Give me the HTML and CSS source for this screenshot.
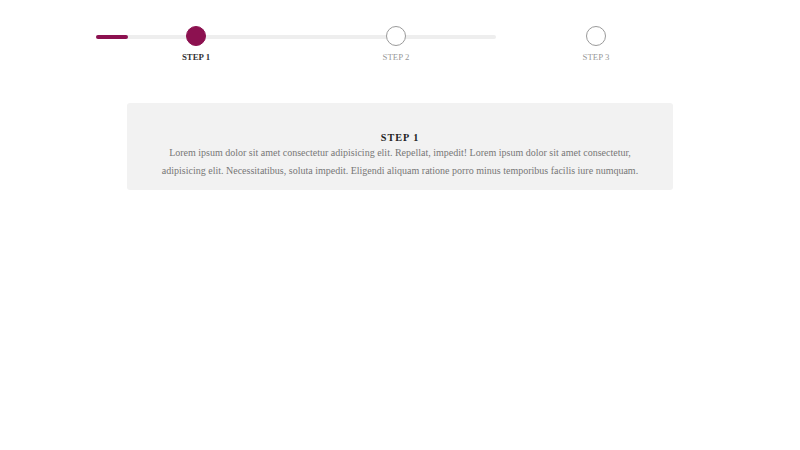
FILE: index.html
```html
<!DOCTYPE html>
<html lang="en">
<head>
  <meta charset="UTF-8" />
  <title>Stepper</title>
  <link rel="stylesheet" href="styles.css">
</head>
<body>
  <div class="stepper">
    <div class="track"><div class="progress"></div></div>
    <div class="step active">
      <span class="dot"></span>
      <span class="label">STEP 1</span>
    </div>
    <div class="step">
      <span class="dot"></span>
      <span class="label">STEP 2</span>
    </div>
    <div class="step">
      <span class="dot"></span>
      <span class="label">STEP 3</span>
    </div>
  </div>

  <div class="panel">
    <h2>STEP 1</h2>
    <p>Lorem ipsum dolor sit amet consectetur adipisicing elit. Repellat, impedit! Lorem ipsum dolor sit amet consectetur, adipisicing elit. Necessitatibus, soluta impedit. Eligendi aliquam ratione porro minus temporibus facilis iure numquam.</p>
  </div>
</body>
</html>
```

FILE: styles.css
```css
body {
  margin: 0;
  font-family: "Liberation Serif", serif;
  background: #fff;
}
.stepper {
  position: relative;
  display: flex;
  width: 600px;
  margin: 26px 0 0 96px;
}
.track {
  position: absolute;
  left: 0;
  top: 9px;
  width: 400px;
  height: 4px;
  background: #eeeeee;
  border-radius: 2px;
}
.progress {
  width: 32px;
  height: 4px;
  background: #8c1150;
  border-radius: 2px;
}
.step {
  position: relative;
  flex: 1;
  display: flex;
  flex-direction: column;
  align-items: center;
}
.dot {
  box-sizing: border-box;
  width: 20px;
  height: 20px;
  border: 1.5px solid #9a9a9a;
  border-radius: 50%;
  background: #fff;
}
.step.active .dot {
  background: #8c1150;
  border-color: #8c1150;
}
.label {
  margin-top: 6px;
  font-size: 8.8px;
  line-height: 10px;
  color: #999;
}
.step.active .label {
  color: #333;
  font-weight: bold;
}
.panel {
  width: 486px;
  margin: 41px auto 0;
  padding: 29px 30px 10px;
  background: #f2f2f2;
  border-radius: 3px;
  text-align: center;
}
.panel h2 {
  margin: 0;
  font-size: 10.2px;
  letter-spacing: 1px;
  line-height: 12px;
  color: #222;
}
.panel p {
  margin: 0;
  font-size: 10px;
  line-height: 18px;
  color: #777;
}
```
